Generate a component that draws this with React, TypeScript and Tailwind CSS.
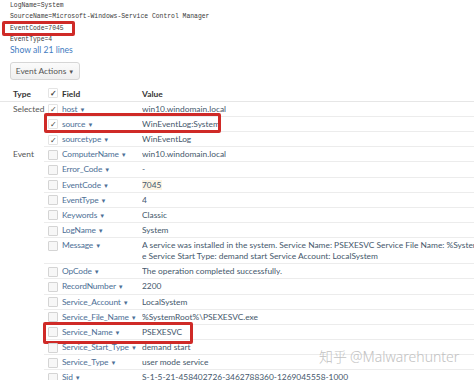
import React from "react";

type Row = {
  type?: string;
  field: string;
  value: string | string[];
  checked?: boolean;
  highlight?: boolean;
  boxed?: "source" | "service";
};

const rows: Row[] = [
  { type: "Selected", field: "host", value: "win10.windomain.local", checked: true },
  { field: "source", value: "WinEventLog:System", checked: true, boxed: "source" },
  { field: "sourcetype", value: "WinEventLog", checked: true },
  { type: "Event", field: "ComputerName", value: "win10.windomain.local" },
  { field: "Error_Code", value: "-" },
  { field: "EventCode", value: "7045", highlight: true },
  { field: "EventType", value: "4" },
  { field: "Keywords", value: "Classic" },
  { field: "LogName", value: "System" },
  {
    field: "Message",
    value: [
      "A service was installed in the system. Service Name: PSEXESVC Service File Name: %SystemRoot%\\PSEXESVC.ex",
      "e Service Start Type: demand start Service Account: LocalSystem",
    ],
  },
  { field: "OpCode", value: "The operation completed successfully." },
  { field: "RecordNumber", value: "2200" },
  { field: "Service_Account", value: "LocalSystem" },
  { field: "Service_File_Name", value: "%SystemRoot%\\PSEXESVC.exe" },
  { field: "Service_Name", value: "PSEXESVC", boxed: "service" },
  { field: "Service_Start_Type", value: "demand start" },
  { field: "Service_Type", value: "user mode service" },
  { field: "Sid", value: "S-1-5-21-458402726-3462788360-1269045558-1000" },
];

function Checkbox({ checked }: { checked?: boolean }) {
  return (
    <div
      className={`w-[10px] h-[10px] rounded-[1px] border flex items-center justify-center text-[8px] leading-none text-[#444] ${
        checked ? "border-[#e4e4e4] bg-white" : "border-[#d4d4d4] bg-[#f7f7f7]"
      }`}
    >
      {checked ? "✓" : ""}
    </div>
  );
}

function FieldRow({ row }: { row: Row }) {
  const multi = Array.isArray(row.value);
  return (
    <div className={`relative flex leading-[9px] ${multi ? "h-[25.8px]" : "h-[15.2px]"}`}>
      <div className="w-[44px] shrink-0 pl-[13px] pt-[3px] text-[#555]">{row.type}</div>
      <div className="flex-1 flex border-b border-[#ececec]">
        <div className="w-[18px] shrink-0 pl-[4px] pt-[2.5px]">
          <Checkbox checked={row.checked} />
        </div>
        <div className="w-[80px] shrink-0 pt-[3px] whitespace-nowrap tracking-[-0.15px] text-[#4d6f96]">
          {row.field} <span className="text-[6px]">▼</span>
        </div>
        <div className="flex-1 pt-[3px] whitespace-nowrap overflow-hidden text-[#44576b]">
          {multi ? (
            (row.value as string[]).map((l) => (
              <div key={l} className="h-[11px] leading-[9px]">
                {l}
              </div>
            ))
          ) : (
            <span className={row.highlight ? "bg-[#fdf4e3] px-[1px] -ml-[1px]" : ""}>{row.value as string}</span>
          )}
        </div>
      </div>
      {row.boxed === "source" && (
        <div className="absolute left-[44px] top-[-4px] w-[177px] h-[20px] border-[3px] border-[#cf2a27] rounded-[2px]" />
      )}
      {row.boxed === "service" && (
        <div className="absolute left-[43px] top-[-3px] w-[150px] h-[22px] border-[3px] border-[#cf2a27] rounded-[2px]" />
      )}
    </div>
  );
}

export default function App() {
  return (
    <div className="relative w-[474px] h-[380px] overflow-hidden bg-white font-['Lato','Open_Sans',sans-serif] text-[8.4px]">
      <div className="pl-[10px] font-['Liberation_Mono',monospace] text-[6.4px] leading-[11.25px] text-[#3a3a3a]">
        <div>LogName=System</div>
        <div>SourceName=Microsoft-Windows-Service Control Manager</div>
        <div className="relative">
          EventCode=7045
          <div className="absolute left-[-8px] top-[-2px] w-[73px] h-[15.5px] border-[3px] border-[#cf2a27] rounded-[2px]" />
        </div>
        <div>EventType=4</div>
      </div>
      <div className="pl-[10px] text-[8.6px] leading-[11.25px] text-[#3f7cbf]">Show all 21 lines</div>

      <div className="pl-[10px] mt-[6px]">
        <div className="w-[70px] h-[18px] rounded-[3px] border border-[#d6d6d6] bg-gradient-to-b from-[#fbfbfb] to-[#efefef] flex items-center justify-center text-[#555] text-[8.4px]">
          Event Actions <span className="ml-[2px] text-[6px]">▼</span>
        </div>
      </div>

      <div className="mt-[7px]">
        <div className="flex h-[14.4px] leading-[9px] border-b border-[#e6e6e6] font-bold text-[#333]">
          <div className="w-[44px] shrink-0 pl-[13px] pt-[3px]">Type</div>
          <div className="w-[18px] shrink-0 pl-[4px] pt-[1px]">
            <Checkbox checked />
          </div>
          <div className="w-[80px] shrink-0 pt-[3px]">Field</div>
          <div className="flex-1 pt-[3px]">Value</div>
        </div>
        {rows.map((r) => (
          <FieldRow key={r.field} row={r} />
        ))}
      </div>

      <div className="absolute left-[319px] top-[347px] text-[14px] leading-[18px] font-light text-[#c2c2c2] font-['Noto_Sans_CJK_SC',sans-serif] whitespace-nowrap">
        知乎 <span className="font-['Noto_Sans','Noto_Sans_CJK_SC',sans-serif] font-light">@Malwarehunter</span>
      </div>
    </div>
  );
}
